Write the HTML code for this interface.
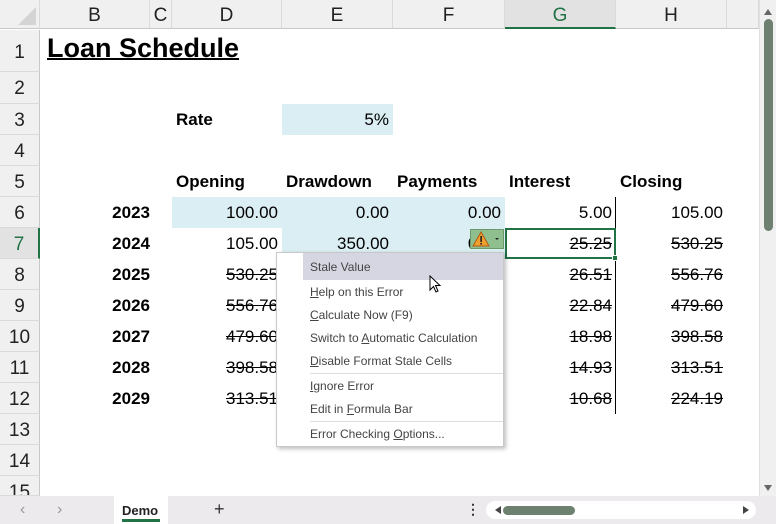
<!DOCTYPE html><html><head><style>
*{margin:0;padding:0;box-sizing:border-box}
body{width:776px;height:524px;overflow:hidden;background:#fff;font-family:"Liberation Sans",sans-serif;position:relative}
.a{position:absolute}
.ch{position:absolute;top:0;height:29px;background:#f0f0f0;border-right:1px solid #dadada;border-bottom:1px solid #c8c8c8;text-align:center;line-height:32px;font-size:19px;color:#222}
.rh{position:absolute;left:0;width:40px;background:#f0f0f0;border-bottom:1px solid #dadada;border-right:1px solid #c8c8c8;text-align:center;font-size:19px;color:#222}
.c{position:absolute;height:31px;line-height:32px;font-size:17px;color:#000;white-space:nowrap;overflow:hidden}
.r{text-align:right;padding-right:4px}
.b{font-weight:bold}
.s{text-decoration:line-through}
.blue{background:#daeef3}
.mi{position:absolute;left:310px;font-size:12px;color:#444;font-family:"Liberation Sans",sans-serif}
</style></head><body>
<div class="ch" style="left:0;width:40px;background:#f0f0f0"><svg width="40" height="29"><polygon points="36,7 36,25 18,25" fill="#d4d4d4"/></svg></div>
<div class="ch" style="left:40px;width:110px">B</div>
<div class="ch" style="left:150px;width:22px">C</div>
<div class="ch" style="left:172px;width:110px">D</div>
<div class="ch" style="left:282px;width:111px">E</div>
<div class="ch" style="left:393px;width:112px">F</div>
<div class="ch" style="left:505px;width:111px;background:#e2e2e2;color:#217346;border-bottom:2px solid #217346">G</div>
<div class="ch" style="left:616px;width:111px">H</div>
<div class="ch" style="left:727px;width:32px"></div>
<div class="rh" style="top:30px;height:42px;line-height:46px">1</div>
<div class="rh" style="top:72px;height:32px;line-height:34px">2</div>
<div class="rh" style="top:104px;height:31px;line-height:33px">3</div>
<div class="rh" style="top:135px;height:31px;line-height:33px">4</div>
<div class="rh" style="top:166px;height:31px;line-height:33px">5</div>
<div class="rh" style="top:197px;height:31px;line-height:33px">6</div>
<div class="rh" style="top:228px;height:31px;line-height:33px;background:#e2e2e2;color:#217346;border-right:2px solid #217346">7</div>
<div class="rh" style="top:259px;height:31px;line-height:33px">8</div>
<div class="rh" style="top:290px;height:31px;line-height:33px">9</div>
<div class="rh" style="top:321px;height:31px;line-height:33px">10</div>
<div class="rh" style="top:352px;height:31px;line-height:33px">11</div>
<div class="rh" style="top:383px;height:31px;line-height:33px">12</div>
<div class="rh" style="top:414px;height:31px;line-height:33px">13</div>
<div class="rh" style="top:445px;height:31px;line-height:33px">14</div>
<div class="rh" style="top:476px;height:20px;line-height:33px;overflow:hidden">15</div>

<div class="a" style="left:47px;top:33px;font-size:27px;font-weight:bold;text-decoration:underline;text-decoration-thickness:2px">Loan Schedule</div>
<div class="c b" style="left:176px;top:104px">Rate</div>
<div class="c r blue" style="left:282px;top:104px;width:111px">5%</div>
<div class="c b" style="left:176px;top:166px">Opening</div>
<div class="c b" style="left:286px;top:166px">Drawdown</div>
<div class="c b" style="left:397px;top:166px">Payments</div>
<div class="c b" style="left:509px;top:166px">Interest</div>
<div class="c b" style="left:620px;top:166px">Closing</div>

<div class="a blue" style="left:172px;top:197px;width:333px;height:31px"></div>
<div class="a blue" style="left:282px;top:228px;width:223px;height:31px"></div>

<div class="c r b" style="left:40px;top:197px;width:114px">2023</div>
<div class="c r" style="left:172px;top:197px;width:110px">100.00</div>
<div class="c r" style="left:282px;top:197px;width:111px">0.00</div>
<div class="c r" style="left:393px;top:197px;width:112px">0.00</div>
<div class="c r" style="left:505px;top:197px;width:111px">5.00</div>
<div class="c r" style="left:616px;top:197px;width:111px">105.00</div>

<div class="c r b" style="left:40px;top:228px;width:114px">2024</div>
<div class="c r" style="left:172px;top:228px;width:110px">105.00</div>
<div class="c r" style="left:282px;top:228px;width:111px">350.00</div>
<div class="c r" style="left:393px;top:228px;width:112px">0.00</div>
<div class="c r s" style="left:505px;top:228px;width:111px">25.25</div>
<div class="c r s" style="left:616px;top:228px;width:111px">530.25</div>

<div class="c r b" style="left:40px;top:259px;width:114px">2025</div>
<div class="c r s" style="left:172px;top:259px;width:110px">530.25</div>
<div class="c r s" style="left:505px;top:259px;width:111px">26.51</div>
<div class="c r s" style="left:616px;top:259px;width:111px">556.76</div>
<div class="c r b" style="left:40px;top:290px;width:114px">2026</div>
<div class="c r s" style="left:172px;top:290px;width:110px">556.76</div>
<div class="c r s" style="left:505px;top:290px;width:111px">22.84</div>
<div class="c r s" style="left:616px;top:290px;width:111px">479.60</div>
<div class="c r b" style="left:40px;top:321px;width:114px">2027</div>
<div class="c r s" style="left:172px;top:321px;width:110px">479.60</div>
<div class="c r s" style="left:505px;top:321px;width:111px">18.98</div>
<div class="c r s" style="left:616px;top:321px;width:111px">398.58</div>
<div class="c r b" style="left:40px;top:352px;width:114px">2028</div>
<div class="c r s" style="left:172px;top:352px;width:110px">398.58</div>
<div class="c r s" style="left:505px;top:352px;width:111px">14.93</div>
<div class="c r s" style="left:616px;top:352px;width:111px">313.51</div>
<div class="c r b" style="left:40px;top:383px;width:114px">2029</div>
<div class="c r s" style="left:172px;top:383px;width:110px">313.51</div>
<div class="c r s" style="left:505px;top:383px;width:111px">10.68</div>
<div class="c r s" style="left:616px;top:383px;width:111px">224.19</div>

<div class="a" style="left:615px;top:197px;width:1px;height:217px;background:#000"></div>
<div class="a" style="left:505px;top:228px;width:111px;height:31px;border:2px solid #217346"></div>
<div class="a" style="left:612px;top:255px;width:6px;height:6px;background:#217346;border:1px solid #fff"></div>

<div class="a" style="left:470px;top:229px;width:34px;height:20px;background:#8fbf8f;border:1px solid #6a9a6a"></div>
<svg class="a" style="left:472px;top:230px" width="30" height="18"><polygon points="9,2 17,16 1,16" fill="#f0a030" stroke="#b05a10" stroke-width="1"/><rect x="8.3" y="6" width="1.6" height="6" fill="#222"/><rect x="8.3" y="13" width="1.6" height="1.6" fill="#222"/><polygon points="23,8 27,8 25,10" fill="#222"/></svg>

<div class="a" style="left:276px;top:252px;width:228px;height:195px;background:#fff;border:1px solid #c8c8c8;box-shadow:2px 2px 4px rgba(0,0,0,.25)"></div>
<div class="a" style="left:303px;top:253px;width:200px;height:27px;background:#d6d6e2"></div>
<div class="mi" style="top:260px">Stale Value</div>
<div class="mi" style="top:285px"><u>H</u>elp on this Error</div>
<div class="mi" style="top:308px"><u>C</u>alculate Now (F9)</div>
<div class="mi" style="top:331px">Switch to <u>A</u>utomatic Calculation</div>
<div class="mi" style="top:354px"><u>D</u>isable Format Stale Cells</div>
<div class="a" style="left:310px;top:373px;width:193px;height:1px;background:#ddd"></div>
<div class="mi" style="top:379px"><u>I</u>gnore Error</div>
<div class="mi" style="top:402px">Edit in <u>F</u>ormula Bar</div>
<div class="a" style="left:310px;top:421px;width:193px;height:1px;background:#ddd"></div>
<div class="mi" style="top:427px">Error Checking <u>O</u>ptions...</div>
<svg class="a" style="left:429px;top:275px" width="14" height="20"><path d="M1,1 L1,15 L4.5,11.5 L7,17 L9,16 L6.5,10.5 L11,10.5 Z" fill="#fff" stroke="#000" stroke-width="1"/></svg>

<div class="a" style="left:759px;top:0;width:17px;height:496px;background:#f0f0f0;border-left:1px solid #e0e0e0"></div>
<svg class="a" style="left:763px;top:8px" width="10" height="8"><polygon points="5,1 9,7 1,7" fill="#666"/></svg>
<div class="a" style="left:764px;top:19px;width:9px;height:212px;background:#6e8070;border-radius:5px"></div>
<svg class="a" style="left:763px;top:484px" width="10" height="8"><polygon points="1,1 9,1 5,7" fill="#666"/></svg>

<div class="a" style="left:0;top:496px;width:776px;height:28px;background:#eceaec"></div>
<div class="a" style="left:20px;top:501px;font-size:16px;color:#999">&#8249;</div>
<div class="a" style="left:57px;top:501px;font-size:16px;color:#999">&#8250;</div>
<div class="a" style="left:114px;top:496px;width:54px;height:28px;background:#fff"></div>
<div class="a" style="left:122px;top:503px;font-size:13px;font-weight:bold;color:#222">Demo</div>
<div class="a" style="left:122px;top:519px;width:38px;height:3px;background:#217346"></div>
<div class="a" style="left:214px;top:499px;font-size:18px;color:#333">+</div>
<div class="a" style="left:466px;top:501px;font-size:14px;color:#333;font-weight:bold">&#8942;</div>
<div class="a" style="left:486px;top:501px;width:270px;height:18px;background:#fff;border-radius:9px"></div>
<svg class="a" style="left:494px;top:505px" width="8" height="10"><polygon points="7,1 7,9 1,5" fill="#444"/></svg>
<div class="a" style="left:503px;top:506px;width:72px;height:9px;background:#6e8070;border-radius:5px"></div>
<svg class="a" style="left:742px;top:505px" width="8" height="10"><polygon points="1,1 1,9 7,5" fill="#444"/></svg>
</body></html>
